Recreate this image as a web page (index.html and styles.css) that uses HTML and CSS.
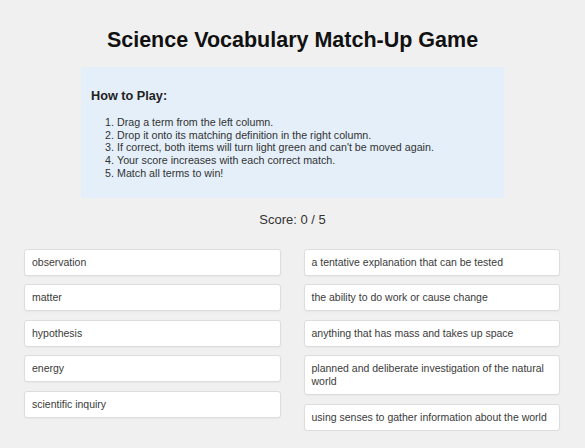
FILE: index.html
```html
<!DOCTYPE html>
<html lang="en">
<head>
    <meta charset="UTF-8">
    <title>Science Vocabulary Match-Up Game</title>
    <link rel="stylesheet" href="styles.css">
</head>
<body>
    <h1>Science Vocabulary Match-Up Game</h1>

    <!-- Instructions box -->
    <div class="instructions">
        <h3>How to Play:</h3>
        <ol>
            <li>Drag a term from the left column.</li>
            <li>Drop it onto its matching definition in the right column.</li>
            <li>If correct, both items will turn light green and can't be moved again.</li>
            <li>Your score increases with each correct match.</li>
            <li>Match all terms to win!</li>
        </ol>
    </div>

    <p class="score">Score: <span id="score">0</span> / 5</p>

    <div class="game">
        <div class="column" id="terms">
            <div class="item" draggable="true">observation</div>
            <div class="item" draggable="true">matter</div>
            <div class="item" draggable="true">hypothesis</div>
            <div class="item" draggable="true">energy</div>
            <div class="item" draggable="true">scientific inquiry</div>
        </div>
        <div class="column" id="definitions">
            <div class="item">a tentative explanation that can be tested</div>
            <div class="item">the ability to do work or cause change</div>
            <div class="item">anything that has mass and takes up space</div>
            <div class="item">planned and deliberate investigation of the natural world</div>
            <div class="item">using senses to gather information about the world</div>
        </div>
    </div>
</body>
</html>
```

FILE: styles.css
```css
body { margin: 0; font-family: "Liberation Sans", Arial, sans-serif; background: #f0f0f0; color: #333; }
h1 { font-size: 21.5px; line-height: 24px; margin: 28px 0 15px; text-align: center; color: #111; }
.instructions { width: 403px; margin: 0 auto; padding: 22px 10px 18px; background: #e4effa; }
.instructions h3 { margin: 0 0 12px; font-size: 12.7px; line-height: 15px; color: #222; }
.instructions ol { margin: 0; padding-left: 26px; font-size: 10.7px; line-height: 12.7px; }
.score { margin: 14px 0 21px; text-align: center; font-size: 13px; line-height: 16px; }
.game { display: grid; grid-template-columns: 1fr 1fr; gap: 23px; padding: 0 25px 0 24px; align-items: start; }
.column { display: flex; flex-direction: column; gap: 8.5px; }
.item { background: #fff; border: 1px solid #ddd; border-radius: 3px; padding: 6px 7px; font-size: 10.5px; line-height: 13px; color: #3a3a3a; box-shadow: 0 1px 2px rgba(0,0,0,0.04); cursor: grab; }
```
